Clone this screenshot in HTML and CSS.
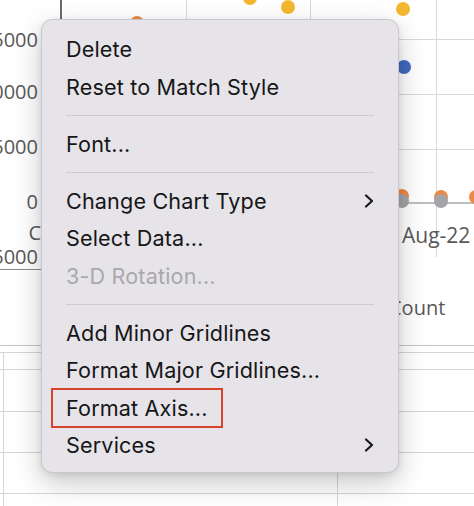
FILE: index.html
```html
<!DOCTYPE html>
<html>
<head>
<meta charset="utf-8">
<link rel="stylesheet" href="styles.css">
</head>
<body>
<div class="canvas">
  <!-- chart background -->
  <div class="axis-v"></div>
  <div class="grid-v g1"></div>
  <div class="grid-v g2"></div>
  <div class="grid-v g3"></div>
  <div class="grid-h h1"></div>
  <div class="grid-h h2"></div>
  <div class="grid-h h3"></div>
  <div class="axis-h"></div>

  <div class="ylab y1">25000</div>
  <div class="ylab y2">20000</div>
  <div class="ylab y3">15000</div>
  <div class="ylab y4">0</div>
  <div class="ylab y5">C</div>
  <div class="ylab y6">-5000</div>
  <div class="lab-line"></div>

  <div class="dot yellow d1"></div>
  <div class="dot yellow d2"></div>
  <div class="dot yellow d3"></div>
  <div class="dot orange d4"></div>
  <div class="dot blue d5"></div>
  <div class="dot orange d6"></div>
  <div class="dot gray d7"></div>
  <div class="dot orange d8"></div>
  <div class="dot gray d9"></div>
  <div class="dot orange d10"></div>

  <div class="xlab">Aug-22</div>
  <div class="count">Count</div>

  <!-- sheet grid -->
  <div class="sheet-h s1"></div>
  <div class="sheet-h s2"></div>
  <div class="sheet-h s3"></div>
  <div class="sheet-h s4"></div>
  <div class="sheet-h s5"></div>
  <div class="sheet-h s6"></div>
  <div class="sheet-v v1"></div>
  <div class="sheet-v v2"></div>

  <!-- context menu -->
  <div class="menu">
    <div class="item">Delete</div>
    <div class="item">Reset to Match Style</div>
    <div class="sep"></div>
    <div class="item">Font...</div>
    <div class="sep"></div>
    <div class="item has-sub">Change Chart Type
      <svg class="chev" width="12" height="16" viewBox="0 0 12 16"><polyline points="3,2.5 9,8 3,13.5" fill="none" stroke="#1c1c1e" stroke-width="2.3" stroke-linecap="round" stroke-linejoin="round"/></svg>
    </div>
    <div class="item">Select Data...</div>
    <div class="item disabled">3-D Rotation...</div>
    <div class="sep"></div>
    <div class="item">Add Minor Gridlines</div>
    <div class="item">Format Major Gridlines...</div>
    <div class="item">Format Axis...</div>
    <div class="item has-sub">Services
      <svg class="chev" width="12" height="16" viewBox="0 0 12 16"><polyline points="3,2.5 9,8 3,13.5" fill="none" stroke="#1c1c1e" stroke-width="2.3" stroke-linecap="round" stroke-linejoin="round"/></svg>
    </div>
    <div class="highlight"></div>
  </div>
</div>
</body>
</html>
```

FILE: styles.css
```css
html, body {
  margin: 0;
  padding: 0;
  background: #ffffff;
}

.canvas {
  position: relative;
  width: 474px;
  height: 506px;
  overflow: hidden;
  background: #ffffff;
  font-family: "Open Sans", "Liberation Sans", sans-serif;
}

/* chart lines */
.axis-v {
  position: absolute;
  left: 60px;
  top: 0;
  width: 1.5px;
  height: 22px;
  background: #6b6b6b;
}
.grid-v {
  position: absolute;
  top: 0;
  width: 1px;
  height: 257px;
  background: #d9d9d9;
}
.g1 { left: 186px; }
.g2 { left: 310px; }
.g3 { left: 436px; }

.grid-h {
  position: absolute;
  left: 61px;
  width: 413px;
  height: 1px;
  background: #d9d9d9;
}
.h1 { top: 39px; }
.h2 { top: 94px; }
.h3 { top: 149px; }
.axis-h {
  position: absolute;
  left: 61px;
  top: 202px;
  width: 413px;
  height: 1.5px;
  background: #bfbfbf;
}

.ylab {
  position: absolute;
  right: 436px;
  font-size: 20px;
  line-height: 24px;
  color: #595959;
  white-space: nowrap;
}
.y1 { top: 28px; }
.y2 { top: 80px; }
.y3 { top: 135px; }
.y4 { top: 190px; }
.y5 { top: 221px; right: 433px; }
.y6 { top: 245px; }
.lab-line {
  position: absolute;
  left: 0;
  top: 269px;
  width: 41px;
  height: 1px;
  background: #8a8a8a;
}

.dot {
  position: absolute;
  width: 14px;
  height: 14px;
  border-radius: 50%;
}
.yellow { background: #f4b731; }
.orange { background: #ec8a44; }
.blue { background: #4169c0; }
.gray { background: #a3a5a8; }
.d1 { left: 243px; top: -9px; }
.d2 { left: 281px; top: 0px; }
.d3 { left: 396px; top: 2px; }
.d4 { left: 130px; top: 16px; }
.d5 { left: 397px; top: 60px; }
.d6 { left: 395px; top: 189px; }
.d7 { left: 395px; top: 194px; }
.d8 { left: 434px; top: 190px; }
.d9 { left: 434px; top: 194px; }
.d10 { left: 469px; top: 190px; }

.xlab {
  position: absolute;
  left: 402px;
  top: 222px;
  font-size: 21px;
  line-height: 26px;
  color: #595959;
}
.count {
  position: absolute;
  left: 389px;
  top: 295px;
  font-size: 20px;
  line-height: 26px;
  color: #595959;
}

.sheet-h {
  position: absolute;
  left: 0;
  width: 474px;
  height: 1px;
  background: #d6d6d6;
}
.s1 { top: 345px; background: #c4c4c4; }
.s2 { top: 352px; }
.s3 { top: 369px; }
.s4 { top: 411px; }
.s5 { top: 452px; }
.s6 { top: 493px; }
.sheet-v {
  position: absolute;
  width: 1px;
  background: #d6d6d6;
}
.v1 { left: 3px; top: 352px; height: 154px; }
.v2 { left: 337px; top: 369px; height: 137px; }

/* context menu */
.menu {
  position: absolute;
  left: 41px;
  top: 19px;
  width: 358px;
  box-sizing: border-box;
  padding: 10.5px 0 8px 0;
  display: flex;
  flex-direction: column;
  background: #e6e4e8;
  border: 1px solid #c9c7cb;
  border-radius: 11px;
  box-shadow: 0 10px 28px rgba(0, 0, 0, 0.22), 0 2px 6px rgba(0, 0, 0, 0.08);
  font-family: "Inter", "Noto Sans", sans-serif;
}
.item {
  height: 37.5px;
  display: flex;
  align-items: center;
  justify-content: space-between;
  padding: 0 24px 0 24px;
  font-size: 21.6px;
  color: #161618;
  letter-spacing: 0.15px;
}
.item.disabled {
  color: #a9a8ac;
}
.chev {
  display: block;
  margin-right: -1px;
}
.sep {
  height: 1px;
  margin: 9px 24px 9.5px 24px;
  background: #cdcbcf;
}
.highlight {
  position: absolute;
  left: 9px;
  top: 368px;
  width: 172px;
  height: 40px;
  box-sizing: border-box;
  border: 2px solid #d8432e;
}
```
